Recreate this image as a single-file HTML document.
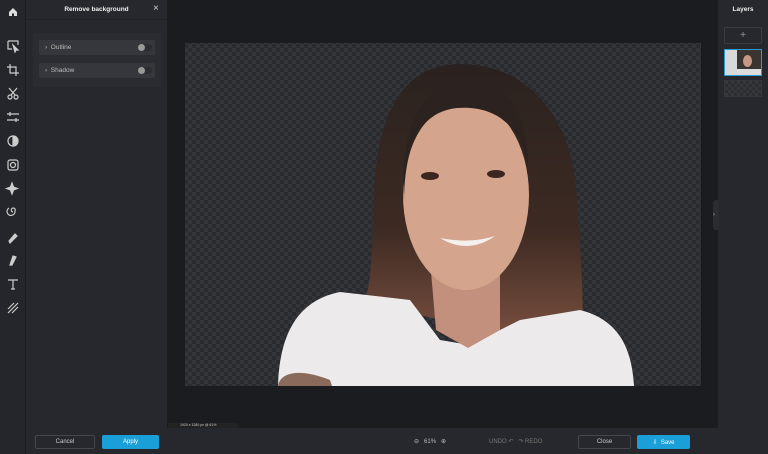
<!DOCTYPE html>
<html><head><meta charset="utf-8"><style>
*{margin:0;padding:0;box-sizing:border-box}
body{width:768px;height:454px;overflow:hidden;background:#18191c;font-family:"Liberation Sans",sans-serif;color:#ddd;position:relative}
.tb{position:absolute;left:0;top:0;width:26px;height:454px;background:#24262b;border-right:1px solid #1c1d20}
.pn{position:absolute;left:26px;top:0;width:141px;height:454px;background:#26282d}
.rp{position:absolute;left:718px;top:0;width:50px;height:454px;background:#26282d}
.hdr{position:absolute;top:0;height:19px;font-size:6.5px;font-weight:bold;color:#eee;line-height:19px;text-align:center}
.row{position:absolute;left:39px;width:116px;height:15px;background:#35373c;border-radius:2px;font-size:6.5px;color:#bbb;line-height:15px;padding-left:6px}
.tg{position:absolute;right:3px;top:4px;width:14px;height:7px;border-radius:4px;background:#2a2c30}
.tg:before{content:"";position:absolute;left:0;top:0;width:7px;height:7px;border-radius:50%;background:#999}
.bar{position:absolute;left:167px;top:428px;width:551px;height:26px;background:#26282d}
.btn{position:absolute;height:14px;border-radius:2px;font-size:6px;display:flex;align-items:center;justify-content:center}
</style></head><body>
<div class="tb"></div>
<div class="pn"></div>
<div class="rp"></div>
<div style="position:absolute;left:167px;top:0;width:551px;height:428px;background:#1b1c1f"></div>
<div class="hdr" style="left:26px;width:141px">Remove background</div>
<div style="position:absolute;left:153px;top:3px;font-size:10px;color:#ccc">×</div>
<div style="position:absolute;left:8px;top:4px;width:10px;height:10px">
<svg width="10" height="10" viewBox="0 0 10 10"><path d="M1 5 L5 1 L9 5 V9 H6 V6.5 H4 V9 H1Z" fill="#ddd"/></svg></div>
<div style="position:absolute;left:26px;top:19px;width:141px;height:1px;background:#202226"></div>
<div style="position:absolute;left:33px;top:33px;width:128px;height:54px;background:#2a2c31;border-radius:2px"></div>
<div class="row" style="top:40px">›&nbsp; Outline<div class="tg"></div></div>
<div class="row" style="top:63px">›&nbsp; Shadow<div class="tg"></div></div>
<svg style="position:absolute;left:0;top:30px" width="26" height="290" viewBox="0 30 26 290" fill="none" stroke="#ccc" stroke-width="1.2">
<path d="M8 41h10v4M8 41v8h4"/><path d="M13 45l5 5-2 0-1 2z" fill="#ccc"/>
<path d="M10 64v9h9M7 67h9v9"/>
<circle cx="10" cy="97" r="2"/><circle cx="16" cy="97" r="2"/><path d="M9 88l6 7M17 88l-6 7"/>
<path d="M7 114h12M7 120h12M10 112v4M16 118v4"/>
<circle cx="13" cy="141" r="5"/><path d="M13 136a5 5 0 0 1 0 10z" fill="#ccc"/>
<rect x="8" y="160" width="10" height="10" rx="2"/><circle cx="13" cy="165" r="2.5"/>
<path d="M12 183l1.5 4 4 1.5-4 1.5-1.5 4-1.5-4-4-1.5 4-1.5z" fill="#ccc"/>
<path d="M13 212a2 2 0 1 1 2 -1a4 4 0 1 1 -6 -3"/>
<path d="M9 241l6-7 2 2-7 7z" fill="#ccc"/>
<path d="M10 265l3-9 3 1-4 8z" fill="#ccc"/>
<path d="M8 280h10M13 280v9M11 289h4"/>
<path d="M8 309l6-6M8 313l10-10M12 313l6-6"/>
</svg>
<svg style="position:absolute;left:185px;top:43px" width="516" height="343" viewBox="185 43 516 343">
<defs><pattern id="ck" width="8" height="8" patternUnits="userSpaceOnUse"><rect width="8" height="8" fill="#2a2b2f"/><rect width="4" height="4" fill="#343539"/><rect x="4" y="4" width="4" height="4" fill="#343539"/></pattern>
<linearGradient id="hr" x1="0" y1="0" x2="0" y2="1"><stop offset="0" stop-color="#2a2220"/><stop offset=".6" stop-color="#3d2a22"/><stop offset="1" stop-color="#7a5040"/></linearGradient></defs>
<rect x="185" y="43" width="516" height="343" fill="url(#ck)"/>
<path d="M460 64 C400 64 375 120 374 200 C372 260 370 300 362 300 L380 305 L520 340 L582 330 C584 290 580 250 577 200 C574 120 530 64 460 64Z" fill="url(#hr)"/>
<path d="M278 386 C280 330 300 300 340 292 L410 300 L440 340 L470 345 L520 320 L580 310 C620 320 632 350 634 386Z" fill="#eceaea"/>
<path d="M278 386 C280 372 300 368 330 380 L332 386Z" fill="#8a6a5a"/>
<path d="M430 260 L500 260 L500 330 L468 348 L436 330Z" fill="#c2907c"/>
<ellipse cx="466" cy="195" rx="63" ry="95" fill="#d4a48c"/>
<path d="M404 200 C405 130 430 105 470 108 C500 110 525 130 528 175 C530 120 510 80 470 80 C420 80 400 130 404 200Z" fill="#2c2220"/>
<ellipse cx="430" cy="176" rx="9" ry="4" fill="#3a2620"/><ellipse cx="496" cy="174" rx="9" ry="4" fill="#3a2620"/>
<path d="M440 238 Q468 255 495 236 Q470 244 440 238Z" fill="#f4f0ee"/>
</svg>
<div style="position:absolute;left:168px;top:423px;width:70px;height:6px;background:#222;font-size:3.5px;color:#ccc;padding-left:12px">1920 x 1280 px @ 61%</div>
<div style="position:absolute;left:713px;top:200px;width:6px;height:30px;background:#2a2c30;border-radius:3px 0 0 3px;font-size:6px;color:#aaa;line-height:30px">›</div>
<div class="bar"></div>
<div style="position:absolute;left:26px;top:428px;width:141px;height:26px;background:#26282d"></div>
<div class="btn" style="left:35px;top:435px;width:60px;border:1px solid #44464b;color:#ccc">Cancel</div>
<div class="btn" style="left:102px;top:435px;width:57px;background:#1a9fd8;color:#fff">Apply</div>
<div style="position:absolute;left:414px;top:438px;font-size:6px;color:#bbb">⊖ &nbsp;&nbsp;61% &nbsp;&nbsp;⊕</div>
<div style="position:absolute;left:489px;top:438px;font-size:6px;color:#777">UNDO ↶ &nbsp;&nbsp;↷ REDO</div>
<div class="btn" style="left:578px;top:435px;width:53px;border:1px solid #44464b;color:#ccc">Close</div>
<div class="btn" style="left:637px;top:435px;width:53px;background:#1a9fd8;color:#fff">⇩&nbsp; Save</div>
<div class="hdr" style="left:718px;width:50px">Layers</div>
<div style="position:absolute;left:724px;top:27px;width:38px;height:17px;border:1px solid #3a3c41;border-radius:2px;text-align:center;color:#999;font-size:10px;line-height:15px">+</div>
<div style="position:absolute;left:724px;top:49px;width:38px;height:27px;border:1px solid #2a9bd0;background:#d9d9d9;overflow:hidden">
<div style="position:absolute;left:12px;top:0;width:26px;height:27px;background:#3a3530"></div>
<div style="position:absolute;left:18px;top:5px;width:9px;height:12px;border-radius:50%;background:#c99884"></div>
<div style="position:absolute;left:12px;top:19px;width:26px;height:8px;background:#ddd"></div></div>
<div style="position:absolute;left:724px;top:80px;width:38px;height:17px;border:1px solid #34363a;background:repeating-conic-gradient(#2c2d31 0 25%,#35373b 0 50%) 0 0/6px 6px"></div>
</body></html>
